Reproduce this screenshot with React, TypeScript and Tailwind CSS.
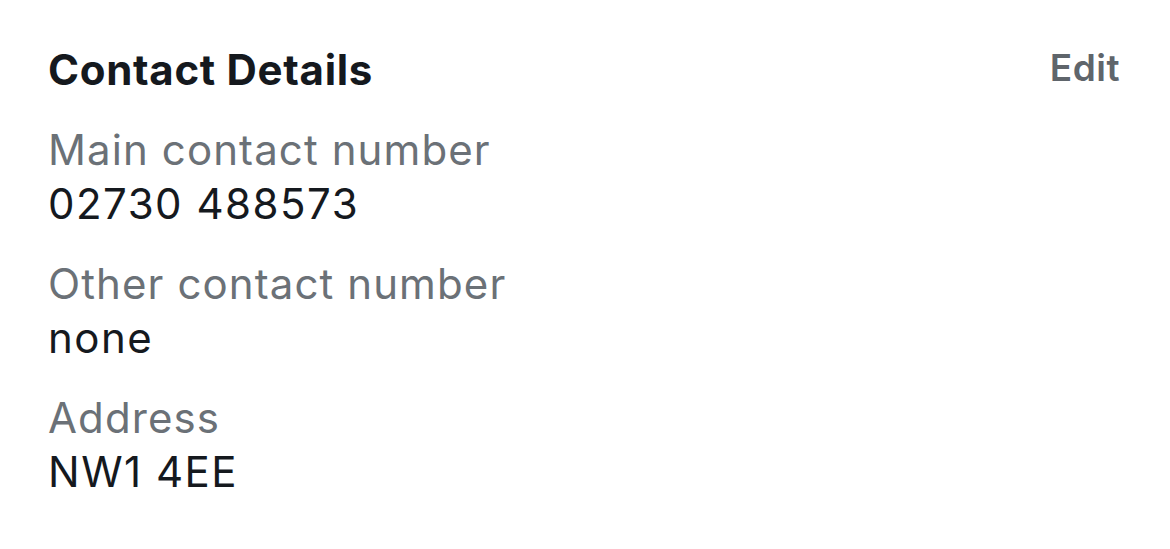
export default function App() {
  const rows = [
    { label: "Main contact number", value: "02730 488573" },
    { label: "Other contact number", value: "none" },
    { label: "Address", value: "NW1 4EE" },
  ];
  return (
    <div className="w-[1170px] h-[549px] bg-white pl-[48px] pr-[50px] pt-[43px] font-['Inter',sans-serif]">
      <div className="flex items-start justify-between">
        <h2 className="text-[42px] leading-[54px] font-bold tracking-[0.7px] text-[#15191e]">Contact Details</h2>
        <button className="text-[37px] leading-[54px] font-semibold tracking-[0.5px] text-[#5f656b] -mt-[2px]">Edit</button>
      </div>
      <div className="mt-[26px] flex flex-col gap-[26px]">
        {rows.map((r) => (
          <div key={r.label} className="flex flex-col">
            <span className="text-[42px] leading-[54px] tracking-[1.1px] text-[#6b7177]">{r.label}</span>
            <span className="text-[42px] leading-[54px] tracking-[1.5px] text-[#15191e]">{r.value}</span>
          </div>
        ))}
      </div>
    </div>
  );
}
